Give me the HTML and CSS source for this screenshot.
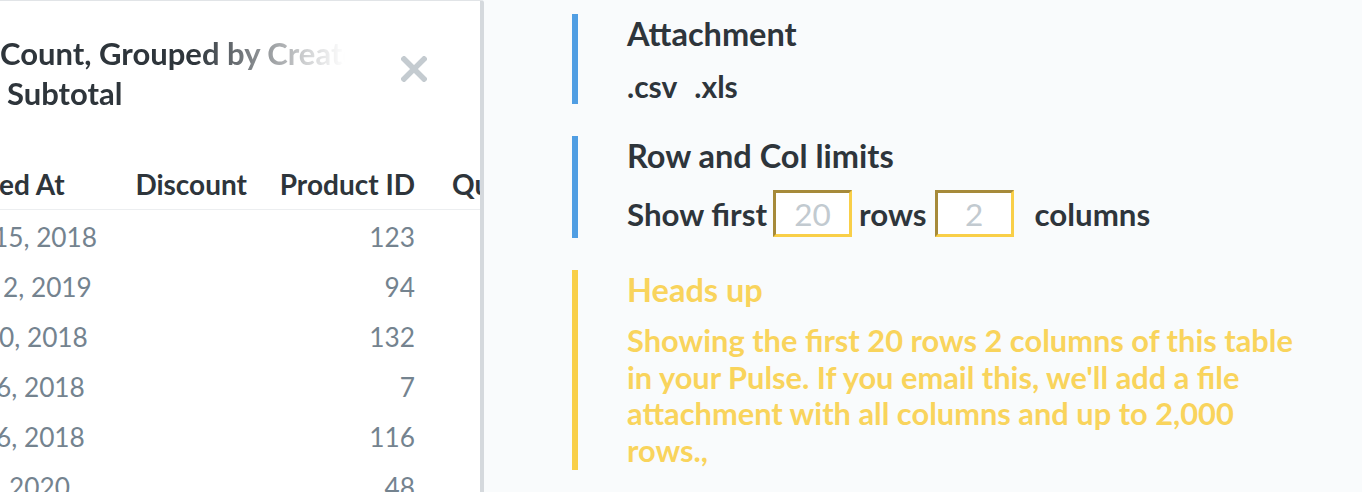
FILE: index.html
```html
<!DOCTYPE html>
<html lang="en">
<head>
<meta charset="utf-8">
<title>Pulse card settings</title>
<link rel="stylesheet" href="styles.css">
</head>
<body>
<div class="page">
  <div class="card">
    <div class="card-head">
      <div class="card-title">
        <span class="title-line">Count, Grouped by Created At</span>
        <span class="title-line second">Subtotal</span>
      </div>
      <svg class="close" width="26" height="26" viewBox="0 0 26 26" aria-hidden="true">
        <path d="M3 3 L23 23 M23 3 L3 23" stroke="currentColor" stroke-width="5.5" stroke-linecap="square"/>
      </svg>
    </div>
    <div class="table">
      <div class="row head">
        <div class="cell c1"><span class="i-h">ed At</span></div>
        <div class="cell c2">Discount</div>
        <div class="cell c3">Product ID</div>
        <div class="cell c4">Quantity</div>
      </div>
      <div class="body">
        <div class="row">
          <div class="cell c1"><span class="i-a">15, 2018</span></div>
          <div class="cell c2"></div>
          <div class="cell c3">123</div>
          <div class="cell c4"></div>
        </div>
        <div class="row">
          <div class="cell c1"><span class="i-b">2, 2019</span></div>
          <div class="cell c2"></div>
          <div class="cell c3">94</div>
          <div class="cell c4"></div>
        </div>
        <div class="row">
          <div class="cell c1"><span class="i-e">0, 2018</span></div>
          <div class="cell c2"></div>
          <div class="cell c3">132</div>
          <div class="cell c4"></div>
        </div>
        <div class="row">
          <div class="cell c1"><span class="i-c">6, 2018</span></div>
          <div class="cell c2"></div>
          <div class="cell c3">7</div>
          <div class="cell c4"></div>
        </div>
        <div class="row">
          <div class="cell c1"><span class="i-c">6, 2018</span></div>
          <div class="cell c2"></div>
          <div class="cell c3">116</div>
          <div class="cell c4"></div>
        </div>
        <div class="row">
          <div class="cell c1"><span class="i-d">2020</span></div>
          <div class="cell c2"></div>
          <div class="cell c3">48</div>
          <div class="cell c4"></div>
        </div>
      </div>
    </div>
  </div>

  <div class="settings">
    <section class="block blue first-block">
      <h4 class="block-title">Attachment</h4>
      <div class="formats"><span>.csv</span><span>.xls</span></div>
    </section>

    <section class="block blue second-block">
      <h4 class="block-title">Row and Col limits</h4>
      <div class="limits">
        <span>Show first</span>
        <input class="limit-input" type="text" value="" placeholder="20">
        <span>rows</span>
        <input class="limit-input cols-input" type="text" value="" placeholder="2">
        <span class="cols">columns</span>
      </div>
    </section>

    <section class="block yellow">
      <h4 class="warn-title">Heads up</h4>
      <p class="warn-text">Showing the first 20 rows 2 columns of this table in your Pulse. If you email this, we'll add a file attachment with all columns and up to 2,000 rows.,</p>
    </section>
  </div>
</div>
</body>
</html>
```

FILE: styles.css
```css
* { box-sizing: border-box; }

html, body {
  margin: 0;
  padding: 0;
  height: 492px;
  overflow: hidden;
}

body {
  font-family: Lato, "Open Sans", "Liberation Sans", sans-serif;
  color: #2e353b;
  background: #f9fbfc;
}

.page {
  display: flex;
  height: 492px;
}

/* ---------- left card ---------- */
.card {
  flex: 0 0 484px;
  background: #ffffff;
  border-top: 1px solid #e1e4e7;
  border-right: 4px solid #d5d9dd;
  border-top-right-radius: 3px;
  overflow: hidden;
  padding-top: 32px;
}

.card-head {
  display: flex;
  align-items: flex-start;
  height: 126px;
}

.card-title {
  width: 350px;
  font-size: 31px;
  font-weight: 700;
  line-height: 40px;
  white-space: nowrap;
  overflow: hidden;
  -webkit-mask-image: linear-gradient(to right, #000 0, #000 195px, rgba(0,0,0,0.2) 310px, transparent 345px);
  mask-image: linear-gradient(to right, #000 0, #000 195px, rgba(0,0,0,0.2) 310px, transparent 345px);
}

.title-line { display: block; }
.title-line.second { padding-left: 7px; }

.close {
  color: #c4cbd0;
  margin-left: 51px;
  margin-top: 23px;
  flex: none;
}

.table {
  font-size: 26.25px;
}

.row {
  display: grid;
  grid-template-columns: 110px 137px 168px 200px;
  height: 50px;
  line-height: 50px;
  white-space: nowrap;
}

.row.head {
  font-size: 28px;
  font-weight: 700;
  color: #2e353b;
  height: 51px;
  border-bottom: 1px solid #eceef0;
}

.body {
  padding-top: 2px;
  color: #74838f;
}

.c1 { text-align: left; overflow: hidden; }
.c2 { text-align: right; }
.c3 { text-align: right; }
.c4 { text-align: left; padding-left: 37px; }

.i-h { display: inline-block; margin-left: -1px; }
.i-a { display: inline-block; margin-left: -7px; }
.i-b { display: inline-block; margin-left: 3px; }
.i-e { display: inline-block; margin-left: -1px; }
.i-c { display: inline-block; margin-left: -4px; }
.i-d { display: inline-block; margin-left: 9px; }

/* ---------- settings ---------- */
.settings {
  flex: 1;
  padding-left: 88px;
  padding-top: 14px;
}

.block {
  border-left: 6px solid #509ee3;
  padding-left: 49px;
}

.block.yellow { border-left-color: #f9cf48; }

.first-block { height: 90px; }
.second-block { height: 102px; margin-top: 32px; }

.block-title {
  margin: 0;
  font-size: 32.5px;
  font-weight: 700;
  line-height: 39px;
}

.formats {
  margin-top: 18px;
  font-size: 30px;
  font-weight: 700;
  line-height: 30px;
  display: flex;
  gap: 17px;
}

.limits {
  margin-top: 15px;
  display: flex;
  align-items: center;
  font-size: 31.25px;
  font-weight: 700;
  line-height: 38px;
  height: 47px;
}

.limit-input {
  width: 79px;
  height: 47px;
  margin: 0 7px 0 6px;
  border-style: solid;
  border-width: 3px;
  border-color: #a68a3a #f9cf48 #f9cf48 #a68a3a;
  background: #ffffff;
  font-family: Lato, "Open Sans", sans-serif;
  font-size: 31.5px;
  text-align: center;
  color: #2e353b;
  padding: 0;
  outline: none;
}

.limit-input.cols-input { margin-left: 8px; }

.limit-input::placeholder { color: #c2cad0; }

.cols { margin-left: 14px; }

.block.yellow {
  margin-top: 32px;
  color: #f9d45c;
}

.warn-title {
  margin: 0;
  font-size: 32.5px;
  font-weight: 700;
  line-height: 39px;
}

.warn-text {
  margin: 14px 0 -3px 0;
  max-width: 690px;
  font-size: 30.8px;
  font-weight: 700;
  line-height: 36.7px;
}
```
